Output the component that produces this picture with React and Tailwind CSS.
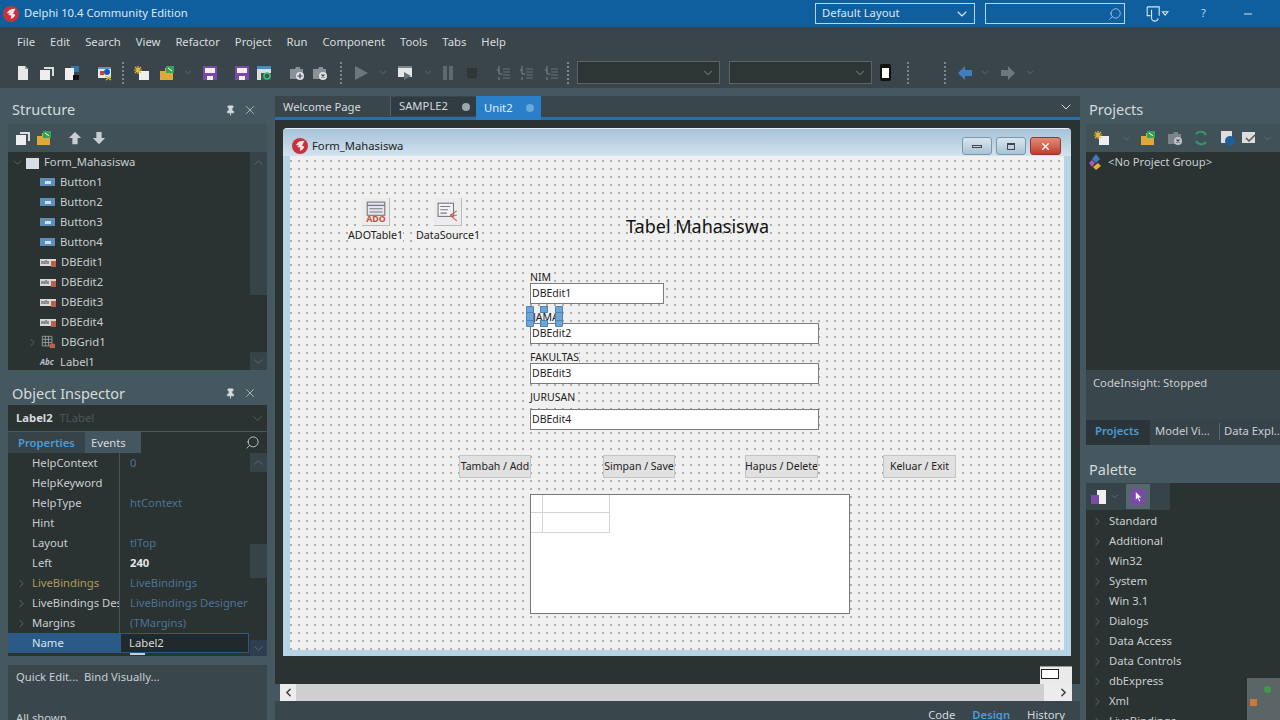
import { ChevronDown, ChevronRight, ChevronLeft, ChevronUp, Search, Pin, X, Minus } from 'lucide-react'

const treeItems = [
  ['Button1', 'btn'], ['Button2', 'btn'], ['Button3', 'btn'], ['Button4', 'btn'],
  ['DBEdit1', 'edit'], ['DBEdit2', 'edit'], ['DBEdit3', 'edit'], ['DBEdit4', 'edit'],
  ['DBGrid1', 'grid'], ['Label1', 'label'],
]

const props = [
  { name: 'HelpContext', value: '0' },
  { name: 'HelpKeyword', value: '' },
  { name: 'HelpType', value: 'htContext' },
  { name: 'Hint', value: '' },
  { name: 'Layout', value: 'tlTop' },
  { name: 'Left', value: '240', bold: true },
  { name: 'LiveBindings', value: 'LiveBindings', arrow: true, gold: true },
  { name: 'LiveBindings Designer', value: 'LiveBindings Designer', arrow: true },
  { name: 'Margins', value: '(TMargins)', arrow: true },
]

const palette = ['Standard', 'Additional', 'Win32', 'System', 'Win 3.1', 'Dialogs', 'Data Access', 'Data Controls', 'dbExpress', 'Xml', 'LiveBindings']

const Svg = ({ className = '', children }) => (
  <svg viewBox="0 0 16 16" className={`w-4 h-4 shrink-0 ${className}`}>{children}</svg>
)

const Logo = ({ className = '' }) => (
  <svg viewBox="0 0 16 16" className={`w-4 h-4 shrink-0 ${className}`}>
    <circle cx="8" cy="8" r="8" fill="#c8323c" />
    <path d="M12.500 2.800C9 2.300 5.800 3.800 3.800 7l3.200.6-2 1.500 3.400.5-.8 3.200c2.600-.4 4.400-2 4.600-4.300L10 7.800z" fill="#f4e6e2" />
  </svg>
)
const Doc = ({ className }) => (
  <Svg className={className}><path d="M3 1h7l3 3v11H3z" fill="#e8e8e8" /><path d="M10 1v3h3z" fill="#999" /></Svg>
)
const Copies = ({ className }) => (
  <Svg className={className}><path d="M5 2h10v9h-2V4H5z" fill="#ddd" /><rect x="1" y="5" width="10" height="10" fill="#eee" /></Svg>
)
const DocBlack = ({ className }) => (
  <Svg className={className}><rect x="7" y="1" width="8" height="6" fill="#2f78b0" /><path d="M1 3h9v12H1z" fill="#eee" /><rect x="9" y="10" width="6" height="5" fill="#111" /></Svg>
)
const Colors = ({ className }) => (
  <Svg className={className}><rect x="1" y="2" width="13" height="11" fill="#e8e8e8" /><rect x="1" y="2" width="13" height="2" fill="#5c94c4" /><circle cx="10" cy="7" r="3" fill="#1c4fc0" /><rect x="3" y="6" width="4" height="4" fill="#d04030" /><path d="M9 11l5 4M14 11l-5 4" stroke="#c8c020" strokeWidth="1.5" /></Svg>
)
const Spark = ({ className }) => (
  <Svg className={className}><path d="M5 6h10v9H5z" fill="#eee" /><path d="M4 1v8M0 5h8M1 2l6 6M7 2L1 8" stroke="#e8b838" strokeWidth="1.2" /></Svg>
)
const FolderOpen = ({ className }) => (
  <Svg className={className}><path d="M1 6h5V3h5v3h3v9H1z" fill="#e0a838" /><rect x="7" y="1" width="8" height="7" fill="#38a058" /><path d="M9 3l4 3" stroke="#fff" /></Svg>
)
const Save = ({ className }) => (
  <Svg className={className}><rect x="1" y="1" width="14" height="14" fill="#7a4aa8" /><rect x="3" y="3" width="10" height="5" fill="#eee" /><rect x="5" y="11" width="6" height="4" fill="#eee" /></Svg>
)
const SaveAs = ({ className }) => (
  <Svg className={className}><rect x="1" y="1" width="14" height="14" fill="#dcdcdc" /><rect x="1" y="1" width="14" height="3" fill="#4f88b8" /><path d="M5 8h10v7H5z" fill="#3a5a48" /><circle cx="11" cy="11" r="3" fill="none" stroke="#3cc080" strokeWidth="1.5" /></Svg>
)
const FolderGray = ({ mark, className }) => (
  <Svg className={className}>
    <path d="M1 4h5l1-2h4v2h3v10H1z" fill="#8a9296" />
    <circle cx="11" cy="11" r="4" fill="#dfe2e3" />
    {mark === 'plus' ? <path d="M11 8.500v5M8.500 11h5" stroke="#445" strokeWidth="1.2" /> : <path d="M9.500 9.500l3 3M12.500 9.500l-3 3" stroke="#445" strokeWidth="1.2" />}
  </Svg>
)
const Play = ({ className }) => (
  <Svg className={className}><path d="M2 1l13 7-13 7z" fill="#6c777b" /></Svg>
)
const RunStep = ({ className }) => (
  <Svg className={className}><rect x="1" y="1" width="14" height="11" fill="#e6e6e6" /><rect x="1" y="1" width="14" height="2" fill="#7a858a" /><path d="M7 7l7 4-7 4z" fill="#64737a" /></Svg>
)
const Pause = ({ className }) => (
  <Svg className={className}><rect x="3" y="1" width="4" height="14" fill="#5e696d" /><rect x="9" y="1" width="4" height="14" fill="#5e696d" /></Svg>
)
const Stop = ({ className }) => (
  <Svg className={className}><rect x="3" y="3" width="10" height="10" fill="#2f3638" /></Svg>
)
const StepIcon = ({ className }) => (
  <Svg className={className}>
    <path d="M4 1v8h3M4 5H2M4 12v3" stroke="#7d888c" fill="none" />
    <path d="M8 4h7M8 7h7M8 10h7M8 13h7" stroke="#687377" strokeWidth="1.2" />
  </Svg>
)
const Arrow = ({ color, flip, className }) => (
  <Svg className={className}>
    <path d={flip ? 'M1 5h7V1l7 7-7 7v-4H1z' : 'M15 5H8V1L1 8l7 7v-4h7z'} fill={color} />
  </Svg>
)
const Grip = ({ className = '' }) => (
  <div className={`w-[2px] h-[22px] shrink-0 border-l-2 border-dotted border-[#7b878c] ${className}`} />
)
const Chev = ({ className = '' }) => <ChevronDown size={11} strokeWidth={1.6} className={`shrink-0 text-[#6f7b80] ${className}`} />

const TreeIcon = ({ type }) => {
  if (type === 'btn') return <div className="w-[15px] h-[8px] bg-[#5e8fb8] flex items-center justify-center"><div className="w-[6px] h-[3px] bg-[#cfe0ee]" /></div>
  if (type === 'edit')
    return (
      <svg viewBox="0 0 16 9" className="w-[16px] h-[9px]">
        <rect x="0" y="1" width="16" height="7" fill="#d8d8d8" />
        <path d="M2 3v3M4 3v3M6 2v4M8 3v3" stroke="#444" />
        <rect x="11" y="3" width="5" height="6" fill="#b8604c" />
      </svg>
    )
  if (type === 'grid')
    return (
      <svg viewBox="0 0 16 16" className="w-[16px] h-[14px]">
        <path d="M1.500 1.500h11v11h-11zM1.500 5h11M1.500 8.500h11M5 1.500v11M8.500 1.500v11" fill="none" stroke="#98a2a6" />
        <rect x="10" y="10" width="6" height="5" fill="#c0604c" />
      </svg>
    )
  return <span className="w-[15px] text-[8px] leading-none italic font-bold text-[#b8c4d0]">Abc</span>
}

const DesignEdit = ({ className, text }) => (
  <div className={`absolute h-[21px] bg-white border border-[#7c7c7c] pl-[1px] flex items-center text-[10.5px] text-[#222] ${className}`}>{text}</div>
)
const DesignLabel = ({ className, text }) => (
  <span className={`absolute text-[10.5px] leading-none bg-[#f0f0f0] text-[#222] ${className}`}>{text}</span>
)
const DesignButton = ({ className, text }) => (
  <div className={`absolute top-[299px] h-[23px] bg-[#e1e1e1] border border-[#c4c4c4] flex items-center justify-center text-[10.5px] text-[#222] overflow-hidden whitespace-nowrap ${className}`}>{text}</div>
)
const Handle = ({ className }) => (
  <div className={`absolute top-[150px] w-[8px] h-[21px] bg-[#6ea4d6] border border-[#4f83b4] rounded-[1px] flex flex-col justify-between ${className}`}>
    <div className="h-[6px] border-b border-[#4f83b4]" />
    <div className="h-[6px] border-t border-[#4f83b4]" />
  </div>
)

export default function App() {
  return (
    <div className="w-[1280px] h-[720px] overflow-hidden flex flex-col bg-[#46585f] text-[11.25px] text-[#d5dadc] font-['Noto_Sans','Open_Sans',sans-serif]">
      {/* title bar */}
      <div className="h-[27px] shrink-0 bg-[#0f5f9f] flex items-center pr-[26px]">
        <Logo className="ml-[3px]" />
        <span className="ml-[5px] text-[#dbe8f2]">Delphi 10.4 Community Edition</span>
        <div className="ml-auto w-[160px] h-[21px] border border-[#b9d6ea] pl-[6px] pr-[4px] flex items-center justify-between text-[#dbe8f2]">
          Default Layout
          <ChevronDown size={16} strokeWidth={1.6} />
        </div>
        <div className="ml-[10px] w-[140px] h-[21px] border border-[#b9d6ea] flex items-center justify-end pr-[2px]">
          <Search size={14} strokeWidth={1.2} className="-scale-x-100 text-[#cfe0ee]" />
        </div>
        <svg viewBox="0 0 22 16" className="ml-[20px] w-[24px] h-[18px] text-[#dbe8f2]" fill="none" stroke="currentColor">
          <path d="M2 1.500h11v8M2 1.500v8h3M6 4v7a3 3 0 0 0 6 1" />
          <path d="M16 6h5l-2.500 3z" />
        </svg>
        <span className="ml-[32px] text-[#b9d6ea]">?</span>
        <Minus size={12} className="ml-[36px] text-[#dbe8f2]" />
      </div>

      {/* menu and tool bars */}
      <div className="h-[61px] shrink-0 bg-[#39454a] flex flex-col">
        <div className="h-[30px] pl-[17px] flex items-center gap-[15px] text-[#d8dddf]">
          {['File', 'Edit', 'Search', 'View', 'Refactor', 'Project', 'Run', 'Component', 'Tools', 'Tabs', 'Help'].map((m) => (
            <span key={m}>{m}</span>
          ))}
        </div>
        <div className="h-[31px] pl-[15px] flex items-center">
          <Doc />
          <Copies className="ml-[8px]" />
          <DocBlack className="ml-[9px]" />
          <Colors className="ml-[17px]" />
          <Grip className="ml-[9px]" />
          <Spark className="ml-[10px]" />
          <FolderOpen className="ml-[9px]" />
          <Chev className="ml-[8px] w-[10px]" />
          <Save className="ml-[9px]" />
          <Save className="ml-[16px]" />
          <SaveAs className="ml-[6px]" />
          <FolderGray mark="plus" className="ml-[17px]" />
          <FolderGray mark="x" className="ml-[7px]" />
          <Grip className="ml-[12px]" />
          <Play className="ml-[11px]" />
          <Chev className="ml-[9px] w-[10px]" />
          <RunStep className="ml-[9px]" />
          <Chev className="ml-[10px] w-[10px]" />
          <Pause className="ml-[7px]" />
          <Stop className="ml-[8px]" />
          <StepIcon className="ml-[15px]" />
          <StepIcon className="ml-[7px]" />
          <StepIcon className="ml-[9px]" />
          <Grip className="ml-[8px]" />
          <div className="ml-[8px] w-[143px] h-[23px] bg-[#2d3535] border border-[#59656a] flex items-center justify-end pr-[4px]"><ChevronDown size={14} className="text-[#5a666a]" /></div>
          <div className="ml-[9px] w-[143px] h-[23px] bg-[#2d3535] border border-[#59656a] flex items-center justify-end pr-[4px]"><ChevronDown size={14} className="text-[#5a666a]" /></div>
          <div className="ml-[8px] w-[11px] h-[17px] bg-[#111] rounded-[2px] flex items-center justify-center"><div className="w-[7px] h-[10px] bg-white" /></div>
          <Grip className="ml-[16px]" />
          <Grip className="ml-[35px]" />
          <Arrow color="#3f7fbf" className="ml-[11px]" />
          <Chev className="ml-[7px] w-[10px]" />
          <Arrow color="#6c777b" flip className="ml-[10px]" />
          <Chev className="ml-[9px] w-[10px]" />
        </div>
      </div>

      <div className="flex-1 min-h-0 flex">
        {/* left docks */}
        <div className="w-[275px] shrink-0 pl-[8px] pr-[8px] pt-[8px] flex flex-col">
          <div className="h-[28px] shrink-0 pl-[4px] pr-[10px] flex items-center justify-between">
            <span className="text-[14.5px] text-[#d5dadc]">Structure</span>
            <div className="flex items-center gap-[7px]">
              <Pin size={11} className="fill-current" />
              <X size={14} strokeWidth={1.2} />
            </div>
          </div>
          <div className="h-[28px] shrink-0 bg-[#405158] pl-[7px] flex items-center">
            <Copies />
            <FolderOpen className="ml-[5px]" />
            <Arrow color="#c8ced0" className="ml-[16px] rotate-90 w-[14px] h-[14px]" />
            <Arrow color="#c8ced0" className="ml-[10px] -rotate-90 w-[14px] h-[14px]" />
          </div>
          <div className="h-[218px] shrink-0 bg-[#2a3232] flex overflow-hidden">
            <div className="flex-1 min-w-0">
              <div className="h-[20px] flex items-center pl-[3px]">
                <ChevronDown size={13} strokeWidth={1.2} className="text-[#6f7b80]" />
                <div className="ml-[2px] w-[13px] h-[13px] bg-[#d8dde8] border-t-2 border-[#333]" />
                <span className="ml-[5px] text-[#c9cfd1]">Form_Mahasiswa</span>
              </div>
              {treeItems.map(([name, type]) => (
                <div key={name} className="relative h-[20px] flex items-center pl-[32px]">
                  {type === 'grid' && <ChevronRight size={13} strokeWidth={1.2} className="absolute left-[18px] text-[#6f7b80]" />}
                  <TreeIcon type={type} />
                  <span className="ml-[5px] text-[#c9cfd1]">{name}</span>
                </div>
              ))}
            </div>
            <div className="w-[17px] shrink-0 bg-[#36444a] flex flex-col justify-between items-center">
              <ChevronUp size={15} strokeWidth={1.4} className="mt-[3px] text-[#5f6e74]" />
              <div className="w-full flex-1 mt-[125px] bg-[#2a3232]" />
              <div className="w-full h-[18px] bg-[#36444a] flex items-center justify-center"><ChevronDown size={15} strokeWidth={1.4} className="text-[#5f6e74]" /></div>
            </div>
          </div>

          <div className="h-[35px] shrink-0 pl-[4px] pr-[10px] flex items-end justify-between pb-[1px]">
            <span className="text-[14.5px] leading-[22px] text-[#d5dadc]">Object Inspector</span>
            <div className="flex items-center gap-[7px] pb-[4px]">
              <Pin size={11} className="fill-current" />
              <X size={14} strokeWidth={1.2} />
            </div>
          </div>
          <div className="h-[26px] shrink-0 bg-[#2a3232] pl-[8px] pr-[2px] flex items-center justify-between">
            <span><b className="font-bold text-[#d5dadc]">Label2</b> <span className="ml-[4px] text-[#4b575b]">TLabel</span></span>
            <ChevronDown size={15} strokeWidth={1.2} className="text-[#5f6e74]" />
          </div>
          <div className="h-[21px] shrink-0 mt-[1px] bg-[#36444a] flex items-center">
            <span className="w-[77px] h-full pl-[10px] pt-[1px] flex items-center font-semibold text-[#4d9bd8]">Properties</span>
            <span className="w-[56px] h-full bg-[#445660] flex items-center pl-[6px] pt-[1px]">Events</span>
            <div className="flex-1 h-full bg-[#2a3232] flex items-center justify-end pr-[7px]">
              <Search size={15} strokeWidth={1.4} className="-scale-x-100 text-[#c9cfd1]" />
            </div>
          </div>
          <div className="h-[203px] shrink-0 bg-[#2a3232] flex overflow-hidden">
            <div className="flex-1 min-w-0">
              {props.map((p) => (
                <div key={p.name} className="relative h-[20px] flex items-center">
                  {p.arrow && <ChevronRight size={13} strokeWidth={1.2} className="absolute left-[7px] text-[#7b878c]" />}
                  <span className={`w-[111px] shrink-0 pl-[24px] overflow-hidden whitespace-nowrap ${p.gold ? 'text-[#b39a5e]' : 'text-[#c9cfd1]'}`}>{p.name}</span>
                  <span className="w-[1px] h-[20px] shrink-0 bg-[#46565c]" />
                  <span className={`pl-[10px] whitespace-nowrap ${p.bold ? 'font-bold text-[#e4e8e9]' : 'text-[#4e7396]'}`}>{p.value}</span>
                </div>
              ))}
              <div className="h-[20px] flex items-center">
                <span className="w-[112px] h-[20px] shrink-0 bg-[#2a5a86] pl-[24px] flex items-center text-[#d5e4f0]">Name</span>
                <span className="w-[129px] h-[20px] border border-[#2a5a86] bg-[#22292a] pl-[8px] flex items-center text-[#d5dadc]">Label2</span>
              </div>
              <div className="h-[3px] pl-[122px]"><div className="w-[15px] h-[2px] bg-[#c9cfd1]" /></div>
            </div>
            <div className="w-[17px] shrink-0 bg-[#2a3232] flex flex-col items-center">
              <div className="w-full h-[19px] shrink-0 bg-[#36444a] flex items-center justify-center"><ChevronUp size={15} strokeWidth={1.4} className="text-[#5f6e74]" /></div>
              <div className="w-full h-[34px] shrink-0 mt-[72px] bg-[#36444a]" />
              <div className="w-full h-[16px] shrink-0 mt-[62px] bg-[#2f3d50] flex items-center justify-center"><ChevronDown size={15} strokeWidth={1.4} className="text-[#5f6e74]" /></div>
            </div>
          </div>
          <div className="flex-1 min-h-0 overflow-hidden mt-[9px] bg-[#39464c] pl-[8px] pt-[4px] text-[#c9cfd1]">
            <div>Quick Edit...&nbsp;&nbsp;Bind Visually...</div>
            <div className="mt-[24px]">All shown</div>
          </div>
        </div>

        {/* designer */}
        <div className="w-[805px] shrink-0 pt-[8px] flex flex-col">
          <div className="h-[24px] shrink-0 bg-[#39464c] border-b-[3px] border-[#2a6ea8] flex">
            <span className="w-[115px] pl-[8px] pt-[1px] flex items-center">Welcome Page</span>
            <span className="w-[86px] pl-[8px] border-l border-[#54636a] flex items-center bg-[#303c41] my-[1px]">SAMPLE2<span className="ml-[14px] w-[8px] h-[8px] rounded-full bg-[#9aa7ad]" /></span>
            <span className="w-[65px] h-[24px] bg-[#2a80c8] pl-[8px] flex items-center text-[#e4eef6]">Unit2<span className="ml-[13px] w-[8px] h-[8px] rounded-full bg-[#6aa9da]" /></span>
            <div className="flex-1 flex items-center justify-end pr-[6px]"><ChevronDown size={16} strokeWidth={1.5} /></div>
          </div>
          <div className="h-[564px] shrink-0 bg-[#2a3232] pl-[8px] pt-[8px] flex flex-col">
            <div className="w-[788px] h-[528px] shrink-0 bg-[#b7d3e6] rounded-t-[4px] border-t border-[#e5eef4] flex flex-col">
              <div className="h-[27px] shrink-0 rounded-t-[4px] bg-gradient-to-b from-[#a7c2d8] to-[#d3e3ef] flex items-center pl-[9px] pt-[7px]">
                <Logo />
                <span className="ml-[4px] text-[#222]">Form_Mahasiswa</span>
                <div className="ml-auto mr-[10px] flex gap-[4px]">
                  <div className="w-[30px] h-[18px] rounded-[3px] border border-[#7d98ad] bg-gradient-to-b from-[#d9e6f0] to-[#a9c3d6] flex items-center justify-center"><div className="w-[10px] h-[3px] border border-[#445]" /></div>
                  <div className="w-[30px] h-[18px] rounded-[3px] border border-[#7d98ad] bg-gradient-to-b from-[#d9e6f0] to-[#a9c3d6] flex items-center justify-center"><div className="w-[8px] h-[7px] border border-[#445] border-t-2" /></div>
                  <div className="w-[31px] h-[18px] rounded-[3px] border border-[#8f3a30] bg-gradient-to-b from-[#e08a78] to-[#c03c2c] flex items-center justify-center"><X size={11} strokeWidth={3} className="text-white" /></div>
                </div>
              </div>
              <div className="relative w-[774px] h-[494px] shrink-0 ml-[7px] overflow-hidden bg-[#f0f0f0] bg-[radial-gradient(circle,#94948e_0.6px,transparent_1px)] bg-[length:8px_8px] bg-[position:-3px_1px]">
                {/* nonvisual components */}
                <div className="absolute left-[72px] top-[42px] w-[28px] h-[28px] bg-[#ececec] border-r border-b border-[#bbb] flex items-center justify-center">
                  <svg viewBox="0 0 20 20" className="w-[22px] h-[22px]">
                    <rect x="2" y="1" width="16" height="12" fill="#e4e8ee" stroke="#777" />
                    <path d="M2 4h16M4 7h12M4 10h12" stroke="#778" />
                    <text x="10" y="19" textAnchor="middle" fontSize="8" fontWeight="bold" fill="#d84838">ADO</text>
                  </svg>
                </div>
                <span className="absolute left-[58px] top-[72px] leading-[14px] bg-[#f0f0f0] text-[10.7px] text-[#222]">ADOTable1</span>
                <div className="absolute left-[144px] top-[42px] w-[28px] h-[28px] bg-[#ececec] border-r border-b border-[#bbb] flex items-center justify-center">
                  <svg viewBox="0 0 20 20" className="w-[22px] h-[22px]" fill="none">
                    <rect x="1" y="2" width="14" height="12" fill="#f4f4f4" stroke="#778" />
                    <path d="M3 5h9M3 8h7M3 11h6" stroke="#778" />
                    <path d="M12 13l6-4M12 13l6 0M12 13l6 5" stroke="#d05a48" />
                  </svg>
                </div>
                <span className="absolute left-[126px] top-[72px] leading-[14px] bg-[#f0f0f0] text-[10.7px] text-[#222]">DataSource1</span>

                <span className="absolute left-[336px] top-[57px] text-[18px] text-[#111] leading-[26px]">Tabel Mahasiswa</span>

                <DesignLabel className="left-[240px] top-[116px]" text="NIM" />
                <DesignEdit className="left-[240px] top-[127px] w-[134px]" text="DBEdit1" />
                <DesignLabel className="left-[243px] top-[156px]" text="JAMA" />
                <DesignEdit className="left-[240px] top-[167px] w-[289px]" text="DBEdit2" />
                <DesignLabel className="left-[240px] top-[196px]" text="FAKULTAS" />
                <DesignEdit className="left-[240px] top-[207px] w-[289px]" text="DBEdit3" />
                <DesignLabel className="left-[240px] top-[236px]" text="JURUSAN" />
                <DesignEdit className="left-[240px] top-[253px] w-[289px]" text="DBEdit4" />

                <Handle className="left-[236px]" />
                <div className="absolute left-[250px] top-[150px] w-[8px] h-[7px] bg-[#6ea4d6] border border-[#4f83b4]" />
                <div className="absolute left-[250px] top-[164px] w-[8px] h-[7px] bg-[#6ea4d6] border border-[#4f83b4]" />
                <Handle className="left-[265px]" />

                <DesignButton className="left-[169px] w-[72px]" text="Tambah / Add" />
                <DesignButton className="left-[313px] w-[72px]" text="Simpan / Save" />
                <DesignButton className="left-[455px] w-[73px]" text="Hapus / Delete" />
                <DesignButton className="left-[593px] w-[73px]" text="Keluar / Exit" />

                <div className="absolute left-[240px] top-[338px] w-[320px] h-[120px] bg-white border border-[#777]">
                  <div className="grid grid-cols-[12px_66px] grid-rows-[18px_19px] w-[79px] border-r border-b border-[#d4d4d4]">
                    <div className="border-r border-b border-[#d4d4d4]" />
                    <div className="border-b border-[#d4d4d4]" />
                    <div className="border-r border-[#d4d4d4]" />
                    <div />
                  </div>
                </div>
              </div>
            </div>
            <div className="w-[792px] h-[28px] shrink-0 -ml-[3px] flex justify-end items-start pt-[10px]">
              <div className="w-[32px] h-[18px] bg-[#eaeaea] border-t border-[#999] flex items-start">
                <div className="w-[18px] h-[10px] mt-[2px] ml-[1px] bg-white border border-[#222]" />
              </div>
            </div>
          </div>
          <div className="h-[17px] shrink-0 ml-[5px] w-[792px] bg-[#cfcfcf] flex justify-between">
            <div className="w-[16px] bg-[#ececec] flex items-center justify-center"><ChevronLeft size={13} strokeWidth={3} className="text-[#444]" /></div>
            <div className="w-[28px] bg-[#ececec] flex items-center justify-end pr-[2px]"><ChevronRight size={13} strokeWidth={3} className="text-[#444]" /></div>
          </div>
          <div className="flex-1 min-h-0 bg-[#39464c] flex justify-end items-center gap-[17px] pr-[15px] pt-[9px]">
            <span>Code</span>
            <span className="font-semibold text-[#4d9bd8]">Design</span>
            <span>History</span>
          </div>
        </div>

        {/* right docks */}
        <div className="relative ml-[6px] flex-1 pt-[8px] flex flex-col">
          <div className="h-[28px] shrink-0 pl-[3px] flex items-center"><span className="text-[14.5px]">Projects</span></div>
          <div className="h-[28px] shrink-0 bg-[#405158] pl-[8px] flex items-center">
            <Spark />
            <Chev className="ml-[11px]" />
            <FolderOpen className="ml-[8px]" />
            <FolderGray mark="x" className="ml-[11px] opacity-80" />
            <Svg className="ml-[10px]"><path d="M13 5a6 6 0 0 0-10-1M3 11a6 6 0 0 0 10 1" fill="none" stroke="#2f9a68" strokeWidth="2" /></Svg>
            <Svg className="ml-[11px]"><rect x="1" y="1" width="11" height="12" fill="#ddd" /><circle cx="10" cy="11" r="5" fill="#20609a" /></Svg>
            <Svg className="ml-[5px]"><rect x="1" y="2" width="13" height="11" fill="#ddd" /><path d="M5 8l3 3 6-6" stroke="#555" fill="none" strokeWidth="1.5" /></Svg>
            <Chev className="ml-[5px]" />
          </div>
          <div className="h-[218px] shrink-0 bg-[#2a3232] pl-[3px]">
            <div className="h-[20px] flex items-center">
              <svg viewBox="0 0 14 16" className="w-[14px] h-[16px]">
                <path d="M7 0l4 5-4 4-4-4z" fill="#4078c0" />
                <path d="M3 6l3 3-3 4-3-4z" fill="#a060c0" />
                <path d="M9 9l3 3-5 4-3-3z" fill="#e8b030" />
              </svg>
              <span className="ml-[5px] text-[#c9cfd1]">&lt;No Project Group&gt;</span>
            </div>
          </div>
          <div className="h-[50px] shrink-0 bg-[#39464c] pl-[7px] pt-[5px] text-[#c9cfd1]">CodeInsight: Stopped</div>
          <div className="h-[25px] shrink-0 bg-[#36444a] pb-[2px] flex items-center text-[#c9cfd1]">
            <span className="w-[64px] h-[25px] -mb-[2px] bg-[#2a3439] pl-[9px] pb-[2px] flex items-center font-semibold text-[#4d9bd8]">Projects</span>
            <span className="ml-[5px] w-[64px]">Model Vi...</span>
            <span className="pl-[4px] border-l border-[#5a6a70] whitespace-nowrap">Data Expl...</span>
          </div>
          <div className="h-[38px] shrink-0 pl-[3px] flex items-end pb-[2px]"><span className="text-[14.5px]">Palette</span></div>
          <div className="h-[27px] shrink-0 bg-[#36444a] flex items-center pl-[5px]">
            <Svg><rect x="6" y="1" width="9" height="14" fill="#eee" /><rect x="0" y="6" width="8" height="9" fill="#7a4aa8" /></Svg>
            <Chev className="ml-[2px]" />
            <div className="ml-[6px] w-[24px] h-[25px] bg-[#56676e] flex items-center justify-center">
              <div className="w-[14px] h-[16px] bg-[#7a4aa8] flex items-center justify-center"><svg viewBox="0 0 10 12" className="w-[9px] h-[11px]"><path d="M2 1l6 6H5l2 4-1 .5-2-4-2 2z" fill="#fff" /></svg></div>
            </div>
            <div className="ml-[20px] flex-1 h-full bg-[#2a3232]" />
          </div>
          <div className="flex-1 min-h-0 bg-[#2a3232] overflow-hidden pt-[1px]">
            {palette.map((g) => (
              <div key={g} className="h-[20px] flex items-center pl-[5px] text-[#c9cfd1]">
                <ChevronRight size={13} strokeWidth={1.2} className="text-[#7b878c]" />
                <span className="ml-[5px]">{g}</span>
              </div>
            ))}
          </div>
          <div className="absolute left-[161px] top-[590px] w-[33px] h-[42px] bg-[#5b6565] pl-[3px] pt-[8px]">
            <div className="w-[7px] h-[7px] ml-[14px] rounded-full bg-[#3f9a48]" />
            <div className="w-[7px] h-[7px] mt-[6px] bg-[#c87838]" />
          </div>
        </div>
      </div>
    </div>
  )
}
